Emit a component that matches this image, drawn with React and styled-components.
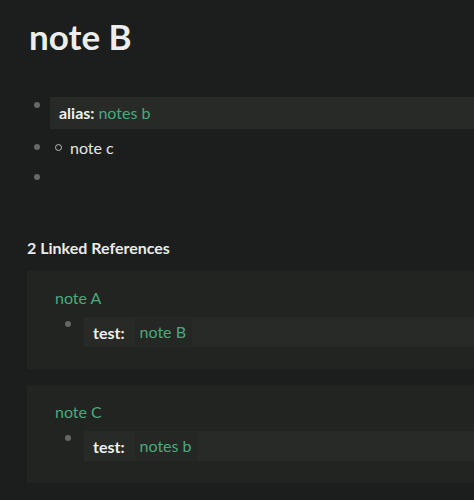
import React from "react"
import styled, { createGlobalStyle } from "styled-components"

const GlobalStyle = createGlobalStyle`
  html, body {
    margin: 0;
    padding: 0;
    background: #1b1e1d;
  }
  body {
    font-family: Lato, "Noto Sans", sans-serif;
    color: #e4e6e4;
    overflow: hidden;
  }
`

const blocks = [
  { kind: "property", label: "alias:", value: "notes b" },
  { kind: "text", text: "note c", sub: true },
  { kind: "text", text: "" },
]

const refs = [
  { page: "note A", label: "test:", value: "note B" },
  { page: "note C", label: "test:", value: "notes b" },
]

export default function App() {
  return (
    <Page>
      <GlobalStyle />
      <Title>note B</Title>
      <BlockList>
        {blocks.map((b, i) => (
          <Block key={i}>
            <BulletWrap $h={b.kind === "property" ? 16 : 24}>
              <Dot />
            </BulletWrap>
            {b.kind === "property" ? (
              <PropBox>
                <PropLabel>{b.label}</PropLabel>
                <PropValue>{b.value}</PropValue>
              </PropBox>
            ) : (
              <TextLine>
                {b.sub && <Hollow />}
                {b.text}
              </TextLine>
            )}
          </Block>
        ))}
      </BlockList>

      <RefsHeading>{refs.length} Linked References</RefsHeading>
      <RefList>
        {refs.map((r) => (
          <RefCard key={r.page}>
            <RefPage>{r.page}</RefPage>
            <Block>
              <BulletWrap $h={14} $w={26}>
                <Dot />
              </BulletWrap>
              <PropBox $card>
                <PropLabel>{r.label}</PropLabel>
                <ValueBox>{r.value}</ValueBox>
              </PropBox>
            </Block>
          </RefCard>
        ))}
      </RefList>
    </Page>
  )
}

const Page = styled.div`
  padding: 14px 0 0 27px;
  width: 447px;
`

const Title = styled.h1`
  margin: 0 0 0 2px;
  font-size: 35px;
  line-height: 44px;
  font-weight: 700;
  color: #eceeed;
`

const BlockList = styled.div`
  margin-top: 39px;
  display: flex;
  flex-direction: column;
  gap: 6px;
`

const Block = styled.div`
  display: flex;
  align-items: flex-start;
`

const BulletWrap = styled.div`
  flex: none;
  width: ${(p) => p.$w || 20}px;
  height: ${(p) => p.$h}px;
  display: flex;
  align-items: center;
  justify-content: center;
  margin-right: 3px;
`

const Dot = styled.span`
  width: 6px;
  height: 6px;
  border-radius: 50%;
  background: #646866;
`

const PropBox = styled.div`
  flex: 1;
  display: flex;
  align-items: center;
  height: ${(p) => (p.$card ? 30 : 32)}px;
  padding-left: 9px;
  padding-bottom: ${(p) => (p.$card ? 0 : 2)}px;
  box-sizing: border-box;
  background: #272a27;
  font-size: 16px;
`

const PropLabel = styled.span`
  font-weight: 700;
  color: #eef0ee;
  margin-right: 4px;
`

const PropValue = styled.span`
  color: #4aa97c;
`

const ValueBox = styled.span`
  margin-left: 6px;
  padding: 0 6px 0 5px;
  line-height: 28px;
  background: #242724;
  color: #4aa97c;
`

const TextLine = styled.div`
  display: flex;
  align-items: center;
  height: 24px;
  font-size: 16px;
  color: #e4e6e4;
`

const Hollow = styled.span`
  width: 5px;
  height: 5px;
  border-radius: 50%;
  border: 1.5px solid #b9bcba;
  margin: 0 8px 0 5px;
`

const RefsHeading = styled.div`
  margin-top: 47px;
  font-size: 16px;
  font-weight: 700;
  line-height: 24px;
  color: #e9ebe9;
`

const RefList = styled.div`
  margin-top: 11px;
  display: flex;
  flex-direction: column;
  gap: 16px;
`

const RefCard = styled.div`
  height: 98px;
  box-sizing: border-box;
  padding: 15px 0 0 28px;
  background: #212421;
`

const RefPage = styled.div`
  font-size: 16px;
  line-height: 24px;
  color: #4aa97c;
  margin-bottom: 7px;
`
